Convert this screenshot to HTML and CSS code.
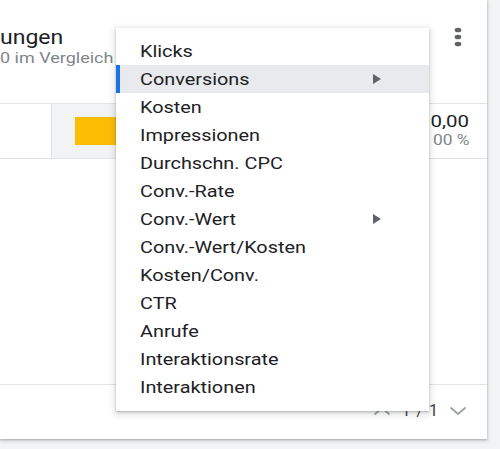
FILE: index.html
```html
<!DOCTYPE html>
<html lang="de">
<head>
<meta charset="utf-8">
<title>Menü</title>
<link rel="stylesheet" href="styles.css">
</head>
<body>
<div class="card">
  <header class="card-head">
    <div class="titles">
      <h2 class="title"><span class="sx sx-title">ungen</span></h2>
      <p class="sub"><span class="sx">0 im Vergleich</span></p>
    </div>
    <button class="kebab" aria-label="Mehr">
      <svg width="8" height="20" viewBox="0 0 8 20"><ellipse cx="4" cy="3" rx="3.3" ry="2.3"/><ellipse cx="4" cy="10" rx="3.3" ry="2.3"/><ellipse cx="4" cy="17" rx="3.3" ry="2.3"/></svg>
    </button>
  </header>
  <div class="row">
    <div class="cell-first"></div>
    <div class="cell-bar"><span class="bar"></span></div>
    <div class="cell-val">
      <div class="val"><span class="sx sx-r">0,00</span></div>
      <div class="pct"><span class="sx sx-r">00 %</span></div>
    </div>
  </div>
  <div class="spacer"></div>
  <footer class="card-foot">
    <svg class="chev" width="18" height="10" viewBox="0 0 18 10"><path d="M1.5 8.5 L9 2 L16.5 8.5"/></svg>
    <span class="pages">1 / 1</span>
    <svg class="chev" width="18" height="10" viewBox="0 0 18 10"><path d="M1.5 1.5 L9 8 L16.5 1.5"/></svg>
  </footer>
  <ul class="menu">
    <li class="item"><span class="sx">Klicks</span></li>
    <li class="item active"><span class="sx">Conversions</span><span class="tri"></span></li>
    <li class="item"><span class="sx">Kosten</span></li>
    <li class="item"><span class="sx">Impressionen</span></li>
    <li class="item"><span class="sx">Durchschn. CPC</span></li>
    <li class="item"><span class="sx">Conv.-Rate</span></li>
    <li class="item"><span class="sx">Conv.-Wert</span><span class="tri"></span></li>
    <li class="item"><span class="sx">Conv.-Wert/Kosten</span></li>
    <li class="item"><span class="sx">Kosten/Conv.</span></li>
    <li class="item"><span class="sx">CTR</span></li>
    <li class="item"><span class="sx">Anrufe</span></li>
    <li class="item"><span class="sx">Interaktionsrate</span></li>
    <li class="item"><span class="sx">Interaktionen</span></li>
  </ul>
</div>
</body>
</html>
```
FILE: styles.css
```css
html, body {
  margin: 0;
  padding: 0;
}
body {
  width: 500px;
  height: 449px;
  overflow: hidden;
  background: #f1f3f4;
  font-family: Roboto, "Liberation Sans", sans-serif;
  color: #202124;
}
.sx {
  display: inline-block;
  transform: scaleX(1.24);
  transform-origin: left center;
  white-space: nowrap;
}
.sx-title {
  transform: scaleX(1.15);
}
.sx-r {
  transform-origin: right center;
}
.card {
  position: relative;
  width: 487px;
  height: 439px;
  background: #fff;
  display: flex;
  flex-direction: column;
  box-shadow: 0 1px 2px rgba(60,64,67,.3), 0 1px 4px 1px rgba(60,64,67,.15);
}
.card-head {
  box-sizing: border-box;
  height: 104px;
  flex: none;
  display: flex;
  justify-content: space-between;
  align-items: flex-start;
  padding: 26px 17px 0 0;
  border-bottom: 1px solid #e3e3e3;
}
.title {
  margin: 0;
  font-size: 20px;
  font-weight: 400;
  line-height: 23px;
  color: #202124;
}
.sub {
  margin: 0;
  font-size: 14.5px;
  line-height: 20px;
  color: #80868b;
}
.kebab {
  border: 0;
  background: none;
  padding: 0;
  margin-top: -1px;
  width: 24px;
  height: 24px;
  display: flex;
  align-items: center;
  justify-content: center;
  fill: #5f6368;
}
.row {
  box-sizing: border-box;
  height: 55px;
  flex: none;
  display: flex;
  align-items: stretch;
  border-bottom: 1px solid #e3e3e3;
}
.cell-first {
  width: 51px;
  border-right: 1px solid #e3e3e3;
  flex: none;
}
.cell-bar {
  width: 363px;
  flex: none;
  background: #f1f3f4;
  display: flex;
  align-items: center;
  padding-left: 23px;
  box-sizing: border-box;
}
.bar {
  display: block;
  width: 120px;
  height: 28px;
  background: #fbbc04;
}
.cell-val {
  flex: 1;
  display: flex;
  flex-direction: column;
  justify-content: center;
  align-items: flex-end;
  padding-right: 18px;
}
.val {
  font-size: 16.5px;
  line-height: 19px;
  color: #202124;
}
.pct {
  font-size: 14px;
  line-height: 19px;
  color: #80868b;
}
.spacer {
  flex: 1;
  border-bottom: 1px solid #e3e3e3;
}
.card-foot {
  box-sizing: border-box;
  height: 54px;
  flex: none;
  display: flex;
  justify-content: flex-end;
  align-items: center;
  gap: 10px;
  padding: 0 20px 3px 0;
}
.chev {
  fill: none;
  stroke: #9aa0a6;
  stroke-width: 1.8;
}
.pages {
  font-size: 16px;
  letter-spacing: 1px;
  color: #3c4043;
}
.menu {
  position: absolute;
  left: 116px;
  top: 28px;
  width: 313px;
  margin: 0;
  padding: 9px 0 10px;
  list-style: none;
  background: #fff;
  box-shadow: 0 1px 2px rgba(60,64,67,.3), 0 2px 6px 2px rgba(60,64,67,.15);
}
.item {
  height: 28px;
  display: flex;
  align-items: center;
  justify-content: space-between;
  padding: 0 48px 0 24px;
  font-size: 16px;
  color: #202124;
}
.item.active {
  background: #e8eaed;
  box-shadow: inset 4px 0 0 #1a73e8;
}
.tri {
  width: 0;
  height: 0;
  border-left: 8px solid #5f6368;
  border-top: 5.5px solid transparent;
  border-bottom: 5.5px solid transparent;
}
```
